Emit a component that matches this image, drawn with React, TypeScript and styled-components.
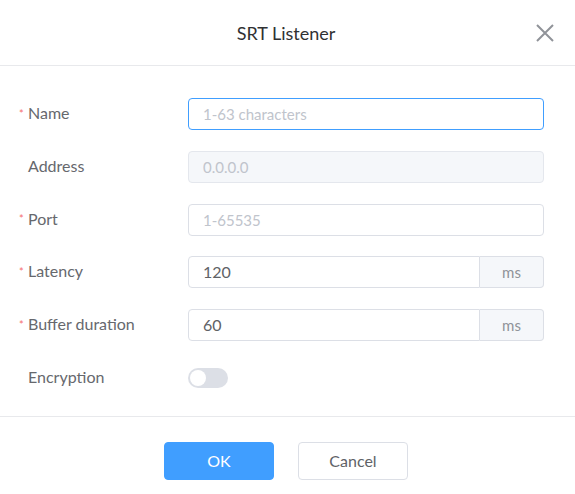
import React from "react";
import styled, { createGlobalStyle } from "styled-components";

const GlobalStyle = createGlobalStyle`
  html, body {
    margin: 0;
    padding: 0;
    background: #ffffff;
    font-family: Lato, "Liberation Sans", sans-serif;
  }
`;

const Dialog = styled.div`
  width: 575px;
  height: 494px;
  background: #ffffff;
  display: flex;
  flex-direction: column;
`;

const Header = styled.div`
  height: 65px;
  border-bottom: 1px solid #e8e9ec;
  display: flex;
  align-items: center;
  justify-content: center;
  position: relative;
`;

const Title = styled.span`
  font-size: 18px;
  color: #303133;
  margin-right: 3px;
`;

const Close = styled.button`
  position: absolute;
  right: 21px;
  top: 24px;
  width: 18px;
  height: 18px;
  padding: 0;
  border: none;
  background: none;
  display: flex;
`;

const Body = styled.div`
  padding: 32px 31px 22px 19px;
  display: flex;
  flex-direction: column;
  gap: 20.8px;
  border-bottom: 1px solid #e8e9ec;
`;

const Row = styled.div`
  height: 32px;
  display: flex;
  align-items: center;
`;

const Label = styled.label`
  width: 169px;
  flex: 0 0 169px;
  display: flex;
  align-items: center;
  font-size: 16px;
  color: #66686d;
  padding-bottom: 3px;
`;

const Star = styled.span<{ $show: boolean }>`
  width: 9px;
  font-size: 11px;
  color: #f56c6c;
  visibility: ${(p) => (p.$show ? "visible" : "hidden")};
  margin-top: 1px;
`;

const Field = styled.div`
  flex: 1;
  display: flex;
  height: 32px;
`;

const Input = styled.input<{ $focus?: boolean; $append?: boolean }>`
  flex: 1;
  min-width: 0;
  height: 32px;
  box-sizing: border-box;
  padding: 0 14px 1px;
  font-family: inherit;
  font-size: 16px;
  color: #606266;
  background: #ffffff;
  border: 1px solid ${(p) => (p.$focus ? "#409eff" : "#dcdfe6")};
  border-radius: ${(p) => (p.$append ? "4px 0 0 4px" : "4px")};
  outline: none;
  &::placeholder {
    color: #c0c4cc;
    font-size: 15px;
  }
  &:disabled {
    background: #f5f7fa;
    border-color: #e4e7ed;
    color: #c0c4cc;
  }
`;

const Append = styled.div`
  width: 64px;
  box-sizing: border-box;
  border: 1px solid #dcdfe6;
  border-left: none;
  border-radius: 0 4px 4px 0;
  background: #f5f7fa;
  color: #909399;
  font-size: 15px;
  display: flex;
  align-items: center;
  justify-content: center;
`;

const Switch = styled.span`
  width: 40px;
  height: 20px;
  border-radius: 10px;
  background: #dcdfe6;
  position: relative;
  &::after {
    content: "";
    position: absolute;
    left: 2px;
    top: 2px;
    width: 16px;
    height: 16px;
    border-radius: 50%;
    background: #ffffff;
  }
`;

const Footer = styled.div`
  padding-top: 25px;
  display: flex;
  justify-content: center;
  gap: 24px;
  padding-right: 3px;
`;

const Button = styled.button<{ $primary?: boolean }>`
  width: 110px;
  height: 38px;
  box-sizing: border-box;
  border-radius: 4px;
  font-family: inherit;
  font-size: 16px;
  border: 1px solid ${(p) => (p.$primary ? "#409eff" : "#dcdfe6")};
  background: ${(p) => (p.$primary ? "#409eff" : "#ffffff")};
  color: ${(p) => (p.$primary ? "#ffffff" : "#606266")};
`;

type FieldRow = {
  label: string;
  required: boolean;
  placeholder?: string;
  value?: string;
  disabled?: boolean;
  focus?: boolean;
  unit?: string;
};

const rows: FieldRow[] = [
  { label: "Name", required: true, placeholder: "1-63 characters", focus: true },
  { label: "Address", required: false, placeholder: "0.0.0.0", disabled: true },
  { label: "Port", required: true, placeholder: "1-65535" },
  { label: "Latency", required: true, value: "120", unit: "ms" },
  { label: "Buffer duration", required: true, value: "60", unit: "ms" },
];

export default function App() {
  return (
    <>
      <GlobalStyle />
      <Dialog>
        <Header>
          <Title>SRT Listener</Title>
          <Close aria-label="close">
            <svg width="18" height="18" viewBox="0 0 18 18">
              <path d="M1 1 L17 17 M17 1 L1 17" stroke="#909399" strokeWidth="2" fill="none" />
            </svg>
          </Close>
        </Header>
        <Body>
          {rows.map((r) => (
            <Row key={r.label}>
              <Label>
                <Star $show={r.required}>*</Star>
                {r.label}
              </Label>
              <Field>
                <Input
                  $focus={r.focus}
                  $append={!!r.unit}
                  placeholder={r.placeholder}
                  defaultValue={r.value}
                  disabled={r.disabled}
                />
                {r.unit && <Append>{r.unit}</Append>}
              </Field>
            </Row>
          ))}
          <Row>
            <Label>
              <Star $show={false}>*</Star>
              Encryption
            </Label>
            <Switch />
          </Row>
        </Body>
        <Footer>
          <Button $primary>OK</Button>
          <Button>Cancel</Button>
        </Footer>
      </Dialog>
    </>
  );
}
